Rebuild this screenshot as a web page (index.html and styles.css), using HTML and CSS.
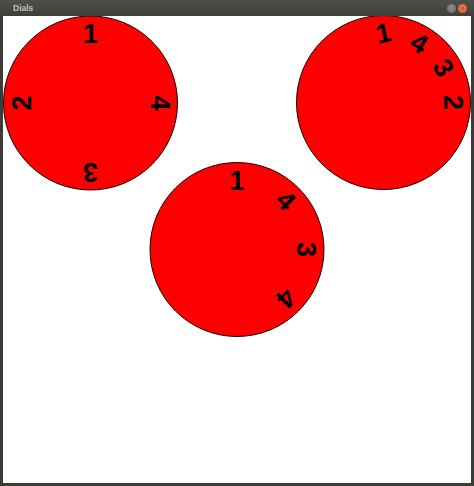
FILE: index.html
```html
<!DOCTYPE html>
<html>
<head>
<meta charset="utf-8">
<link rel="stylesheet" href="styles.css">
</head>
<body>
<div class="window">
  <div class="titlebar">
    <span class="title">Dials</span>
    <div class="buttons">
      <span class="btn btn-min"></span>
      <span class="btn btn-close">&#x2715;</span>
    </div>
  </div>
  <div class="content">
    <svg class="canvas" width="468" height="467" viewBox="3 16 468 467" xmlns="http://www.w3.org/2000/svg">
      <g class="dial">
        <circle cx="90.5" cy="103" r="87" />
        <text x="90.5" y="43" transform="rotate(0 90.5 103)">1</text>
        <text x="90.5" y="43" transform="rotate(90 90.5 103)">4</text>
        <text x="90.5" y="43" transform="rotate(180 90.5 103)">3</text>
        <text x="90.5" y="43" transform="rotate(270 90.5 103)">2</text>
      </g>
      <g class="dial">
        <circle cx="383.5" cy="102.5" r="87" />
        <text x="383.5" y="42.5" transform="rotate(-12 383.5 33)">1</text>
        <text x="383.5" y="42.5" transform="rotate(31 383.5 102.5)">4</text>
        <text x="383.5" y="42.5" transform="rotate(60 383.5 102.5)">3</text>
        <text x="383.5" y="42.5" transform="rotate(90 383.5 102.5)">2</text>
      </g>
      <g class="dial">
        <circle cx="237" cy="249.5" r="87" />
        <text x="237" y="189.5" transform="rotate(0 237 249.5)">1</text>
        <text x="237" y="189.5" transform="rotate(45 237 249.5)">4</text>
        <text x="237" y="189.5" transform="rotate(90 237 249.5)">3</text>
        <text x="237" y="189.5" transform="rotate(135 237 249.5)">4</text>
      </g>
    </svg>
  </div>
</div>
</body>
</html>
```
FILE: styles.css
```css
html, body {
  margin: 0;
  padding: 0;
  background: #3c3b37;
}
.window {
  width: 474px;
  height: 486px;
  display: flex;
  flex-direction: column;
  background: #3c3b37;
}
.titlebar {
  height: 16px;
  flex: 0 0 16px;
  display: flex;
  align-items: center;
  justify-content: space-between;
  background: linear-gradient(#4f4e4a, #3f3e3a);
  padding: 0 7px 0 13px;
  box-sizing: border-box;
}
.title {
  font-family: "Liberation Sans", Arial, sans-serif;
  font-weight: bold;
  font-size: 8.5px;
  color: #c3c1ba;
  line-height: 1;
  margin-top: 1px;
}
.buttons {
  display: flex;
  gap: 2px;
  align-items: center;
}
.btn {
  width: 9px;
  height: 9px;
  border-radius: 50%;
  display: flex;
  align-items: center;
  justify-content: center;
  font-family: "DejaVu Sans", sans-serif;
  font-size: 5px;
  font-weight: bold;
  line-height: 1;
}
.btn-min {
  background: radial-gradient(circle at 50% 40%, #8b8a85, #6a6964);
}
.btn-close {
  background: radial-gradient(circle at 50% 40%, #f27a4f, #e0562a);
  color: #8a3a1a;
}
.content {
  flex: 1;
  margin: 0 3px 3px 3px;
  background: #ffffff;
  overflow: hidden;
}
.canvas {
  display: block;
}
.dial circle {
  fill: #ff0000;
  stroke: #1a0000;
  stroke-width: 1;
}
.dial text {
  font-family: "Liberation Sans", Arial, sans-serif;
  font-weight: bold;
  font-size: 27px;
  fill: #000000;
  text-anchor: middle;
}
```
